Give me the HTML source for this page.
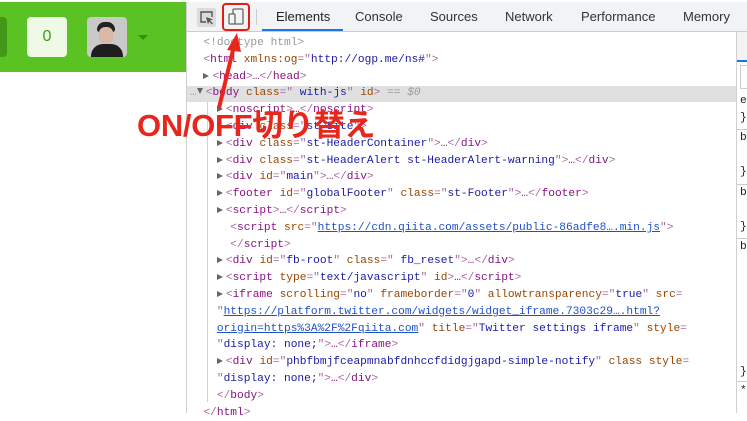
<!DOCTYPE html>
<html><head><meta charset="utf-8"><style>
body{margin:0;width:747px;height:413px;overflow:hidden;background:#fff;position:relative;font-family:"Liberation Sans",sans-serif}
.abs{position:absolute}
.code{font-family:"Liberation Mono",monospace;font-size:11.2px;line-height:16.8px;white-space:pre;color:#881280}
.t{color:#881280}.b{color:#a86aa0}.a{color:#994500}.v{color:#1a1aa6}.g{color:#999}.l{text-decoration:underline;color:#2050c8}
.tri{display:inline-block;width:0;height:0;border-left:6px solid #666;border-top:3.5px solid transparent;border-bottom:3.5px solid transparent;margin-right:3px;vertical-align:0px}
.trd{display:inline-block;width:0;height:0;border-top:6px solid #666;border-left:3.5px solid transparent;border-right:3.5px solid transparent;margin-right:3px;vertical-align:1px}
.tab{position:absolute;top:9px;font-size:13px;color:#333}
</style></head><body>
<div class="abs" style="left:0;top:2px;width:186px;height:70px;background:#5bc223"></div>
<div class="abs" style="left:0;top:17px;width:7px;height:40px;background:#43981a;border-radius:0 4px 4px 0"></div>
<div class="abs" style="left:27px;top:17px;width:40px;height:40px;background:#eef9e6;border-radius:4px;color:#3f9a14;font-size:16px;text-align:center;line-height:40px">0</div>
<div class="abs" style="left:87px;top:17px;width:40px;height:40px;background:#c9c9c9;border-radius:4px;overflow:hidden">
 <div class="abs" style="left:10px;top:5px;width:18px;height:10px;background:#222;border-radius:9px 9px 3px 3px"></div>
 <div class="abs" style="left:12px;top:10px;width:14px;height:17px;background:#d9b8a5;border-radius:6px"></div>
 <div class="abs" style="left:4px;top:27px;width:32px;height:16px;background:#1e1e1e;border-radius:12px 12px 0 0"></div>
</div>
<div class="abs" style="left:138px;top:35px;width:0;height:0;border-top:5px solid #3a8a14;border-left:5px solid transparent;border-right:5px solid transparent"></div>
<div class="abs" style="left:186px;top:2px;width:1px;height:411px;background:#cfcfcf"></div>
<div class="abs" style="left:187px;top:2px;width:560px;height:29px;background:#f1f3f4;border-bottom:1px solid #cbcdd1"></div>
<div class="abs" style="left:197px;top:8px;width:19px;height:19px;background:#dcdcdc;border-radius:2px"></div>
<svg class="abs" style="left:197px;top:8px" width="19" height="19" viewBox="0 0 19 19"><path d="M9 14H4V4h11v5" fill="none" stroke="#555" stroke-width="1.4"/><path d="M9 9l7 2.5-3 1 3 3-1 1-3-3-1 3z" fill="#555"/></svg>
<svg class="abs" style="left:227px;top:7px" width="18" height="20" viewBox="0 0 18 20"><rect x="6" y="2" width="10" height="15" rx="1" fill="none" stroke="#666" stroke-width="1.3"/><rect x="2" y="7" width="6" height="10" rx="1" fill="#f1f3f4" stroke="#666" stroke-width="1.3"/></svg>
<div class="abs" style="left:222px;top:3px;width:24px;height:24px;border:2.5px solid #e31c17;border-radius:4px"></div>
<div class="abs" style="left:256px;top:9px;width:1px;height:16px;background:#ccc"></div>
<div class="tab" style="left:276px;color:#222">Elements</div>
<div class="abs" style="left:262px;top:29px;width:81px;height:2px;background:#1a73e8"></div>
<div class="tab" style="left:355px">Console</div>
<div class="tab" style="left:430px">Sources</div>
<div class="tab" style="left:505px">Network</div>
<div class="tab" style="left:581px">Performance</div>
<div class="tab" style="left:683px">Memory</div>
<div class="abs" style="left:736px;top:32px;width:1px;height:381px;background:#d0d0d0"></div>
<div class="abs" style="left:737px;top:32px;width:10px;height:28px;background:#f3f3f3"></div>
<div class="abs" style="left:737px;top:60px;width:10px;height:2px;background:#1a73e8"></div>
<div class="abs" style="left:740px;top:65px;width:7px;height:22px;border:1px solid #ccc;border-right:none"></div>
<div class="abs code" style="left:740px;top:93px;color:#222">e
}</div>
<div class="abs" style="left:737px;top:129px;width:10px;height:1px;background:#ccc"></div>
<div class="abs code" style="left:740px;top:130px;color:#222">b

}</div>
<div class="abs" style="left:737px;top:184px;width:10px;height:1px;background:#ccc"></div>
<div class="abs code" style="left:740px;top:185px;color:#222">b

}</div>
<div class="abs" style="left:737px;top:238px;width:10px;height:1px;background:#ccc"></div>
<div class="abs code" style="left:740px;top:239px;color:#222">b</div>
<div class="abs code" style="left:740px;top:364px;color:#222">}</div>
<div class="abs" style="left:737px;top:381px;width:10px;height:1px;background:#ccc"></div>
<div class="abs code" style="left:740px;top:383px;color:#222">*</div>
<div class="abs" style="left:187px;top:86px;width:549px;height:16px;background:#e0e0e0"></div>
<div class="abs" style="left:207px;top:102px;width:1px;height:300px;background:#c4d4ef"></div>
<div class="abs code" style="left:190px;top:35px"><span class="g">  &lt;!doctype html&gt;</span>
  <span class="b">&lt;</span>html <span class="a">xmlns:og</span><span class="b">="</span><span class="v">http://ogp.me/ns#</span><span class="b">"&gt;</span>
  <span class="tri"></span><span class="b">&lt;</span>head<span class="b">&gt;</span>…<span class="b">&lt;/</span>head<span class="b">&gt;</span>
<span class="g">…</span><span class="trd"></span><span class="b">&lt;</span>body <span class="a">class</span><span class="b">="</span><span class="v"> with-js</span><span class="b">"</span> <span class="a">id</span><span class="b">&gt;</span> <span class="g">== <i>$0</i></span>
    <span class="tri"></span><span class="b">&lt;</span>noscript<span class="b">&gt;</span>…<span class="b">&lt;/</span>noscript<span class="b">&gt;</span>
    <span class="tri"></span><span class="b">&lt;</span>div <span class="a">class</span><span class="b">="</span><span class="v">st-Site</span><span class="b">"&gt;</span>
    <span class="tri"></span><span class="b">&lt;</span>div <span class="a">class</span><span class="b">="</span><span class="v">st-HeaderContainer</span><span class="b">"&gt;</span>…<span class="b">&lt;/</span>div<span class="b">&gt;</span>
    <span class="tri"></span><span class="b">&lt;</span>div <span class="a">class</span><span class="b">="</span><span class="v">st-HeaderAlert st-HeaderAlert-warning</span><span class="b">"&gt;</span>…<span class="b">&lt;/</span>div<span class="b">&gt;</span>
    <span class="tri"></span><span class="b">&lt;</span>div <span class="a">id</span><span class="b">="</span><span class="v">main</span><span class="b">"&gt;</span>…<span class="b">&lt;/</span>div<span class="b">&gt;</span>
    <span class="tri"></span><span class="b">&lt;</span>footer <span class="a">id</span><span class="b">="</span><span class="v">globalFooter</span><span class="b">"</span> <span class="a">class</span><span class="b">="</span><span class="v">st-Footer</span><span class="b">"&gt;</span>…<span class="b">&lt;/</span>footer<span class="b">&gt;</span>
    <span class="tri"></span><span class="b">&lt;</span>script<span class="b">&gt;</span>…<span class="b">&lt;/</span>script<span class="b">&gt;</span>
      <span class="b">&lt;</span>script <span class="a">src</span><span class="b">="</span><span class="l">https://cdn.qiita.com/assets/public-86adfe8….min.js</span><span class="b">"&gt;</span>
      <span class="b">&lt;/</span>script<span class="b">&gt;</span>
    <span class="tri"></span><span class="b">&lt;</span>div <span class="a">id</span><span class="b">="</span><span class="v">fb-root</span><span class="b">"</span> <span class="a">class</span><span class="b">="</span><span class="v"> fb_reset</span><span class="b">"&gt;</span>…<span class="b">&lt;/</span>div<span class="b">&gt;</span>
    <span class="tri"></span><span class="b">&lt;</span>script <span class="a">type</span><span class="b">="</span><span class="v">text/javascript</span><span class="b">"</span> <span class="a">id</span><span class="b">&gt;</span>…<span class="b">&lt;/</span>script<span class="b">&gt;</span>
    <span class="tri"></span><span class="b">&lt;</span>iframe <span class="a">scrolling</span><span class="b">="</span><span class="v">no</span><span class="b">"</span> <span class="a">frameborder</span><span class="b">="</span><span class="v">0</span><span class="b">"</span> <span class="a">allowtransparency</span><span class="b">="</span><span class="v">true</span><span class="b">"</span> <span class="a">src</span><span class="b">=</span>
    <span class="b">"</span><span class="l">https://platform.twitter.com/widgets/widget_iframe.7303c29….html?</span>
    <span class="l">origin=https%3A%2F%2Fqiita.com</span><span class="b">"</span> <span class="a">title</span><span class="b">="</span><span class="v">Twitter settings iframe</span><span class="b">"</span> <span class="a">style</span><span class="b">=</span>
    <span class="b">"</span><span class="v">display: none;</span><span class="b">"&gt;</span>…<span class="b">&lt;/</span>iframe<span class="b">&gt;</span>
    <span class="tri"></span><span class="b">&lt;</span>div <span class="a">id</span><span class="b">="</span><span class="v">phbfbmjfceapmnabfdnhccfdidgjgapd-simple-notify</span><span class="b">"</span> <span class="a">class style</span><span class="b">=</span>
    <span class="b">"</span><span class="v">display: none;</span><span class="b">"&gt;</span>…<span class="b">&lt;/</span>div<span class="b">&gt;</span>
    <span class="b">&lt;/</span>body<span class="b">&gt;</span>
  <span class="b">&lt;/</span>html<span class="b">&gt;</span></div>
<div class="abs" style="left:137px;top:108px;font-size:31px;font-weight:bold;color:#e8261c;font-family:'Liberation Sans','Noto Sans CJK JP',sans-serif;letter-spacing:-0.3px;line-height:36px;white-space:nowrap">ON/OFF切り替え</div>
<svg class="abs" style="left:210px;top:28px" width="40" height="85" viewBox="0 0 40 85"><path d="M9 80L24 18" stroke="#e8261c" stroke-width="4" fill="none"/><path d="M27 5L17 22L31 24Z" fill="#e8261c"/></svg>
</body></html>
